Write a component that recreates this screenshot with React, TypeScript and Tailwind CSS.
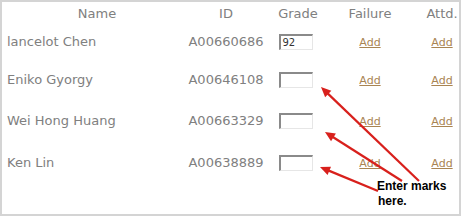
const students = [
  { name: 'lancelot Chen', id: 'A00660686', grade: '92', h: 'h-[32px]' },
  { name: 'Eniko Gyorgy', id: 'A00646108', grade: '', h: 'h-[44px]' },
  { name: 'Wei Hong Huang', id: 'A00663329', grade: '', h: 'h-[38px]' },
  { name: 'Ken Lin', id: 'A00638889', grade: '', h: 'h-[46px]' },
];

const cols = 'grid grid-cols-[186px_72px_72px_72px_72px] items-center';

function AddLink() {
  return (
    <a href="#" className="text-[11px] text-[#a98452] underline underline-offset-1 leading-none">
      Add
    </a>
  );
}

function Arrow({ x1, y1, x2, y2 }: { x1: number; y1: number; x2: number; y2: number }) {
  const a = Math.atan2(y2 - y1, x2 - x1);
  const len = 11;
  const w = 0.42;
  const p1 = [x2 - len * Math.cos(a - w), y2 - len * Math.sin(a - w)];
  const p2 = [x2 - len * Math.cos(a + w), y2 - len * Math.sin(a + w)];
  const bx = x2 - len * 0.8 * Math.cos(a);
  const by = y2 - len * 0.8 * Math.sin(a);
  return (
    <g>
      <line x1={x1} y1={y1} x2={bx} y2={by} stroke="#d8201c" strokeWidth="2.2" />
      <polygon points={`${x2},${y2} ${p1[0]},${p1[1]} ${p2[0]},${p2[1]}`} fill="#d8201c" />
    </g>
  );
}

export default function App() {
  return (
    <div
      className="relative w-[461px] h-[216px] bg-white border-2 border-[#d4d4d4] overflow-hidden text-[13px] text-[#808080]"
      style={{ fontFamily: '"DejaVu Sans", Verdana, sans-serif' }}
    >
      <div className={`${cols} h-[24px] justify-items-center pl-[2px]`}>
        <span>Name</span>
        <span>ID</span>
        <span>Grade</span>
        <span>Failure</span>
        <span>Attd.</span>
      </div>
      {students.map((s) => (
        <div key={s.id} className={`${cols} ${s.h} justify-items-center pl-[2px]`}>
          <span className="justify-self-start pl-[3px] whitespace-nowrap">{s.name}</span>
          <span className="whitespace-nowrap">{s.id}</span>
          <div className="w-[34px] h-[16px] border-t-2 border-l-2 border-b border-r border-t-[#8a8a8a] border-l-[#8a8a8a] border-b-[#e6e6e6] border-r-[#e6e6e6] text-[10px] text-[#333] leading-[13px] pl-[2px] mr-[5px]">
            {s.grade}
          </div>
          <AddLink />
          <AddLink />
        </div>
      ))}

      <svg className="absolute left-0 top-0 pointer-events-none" width="461" height="216" viewBox="-2 -2 461 216">
        <Arrow x1={415} y1={177} x2={317} y2={83} />
        <Arrow x1={398} y1={177} x2={321} y2={128} />
        <Arrow x1={374} y1={187} x2={316} y2={163} />
      </svg>

      <div
        className="absolute left-[375px] top-[177px] text-[12px] font-bold text-black leading-[15px]"
        style={{ fontFamily: '"Liberation Sans", Arial, sans-serif' }}
      >
        Enter marks
        <br />
        <span className="pl-[1px]">here.</span>
      </div>
    </div>
  );
}
